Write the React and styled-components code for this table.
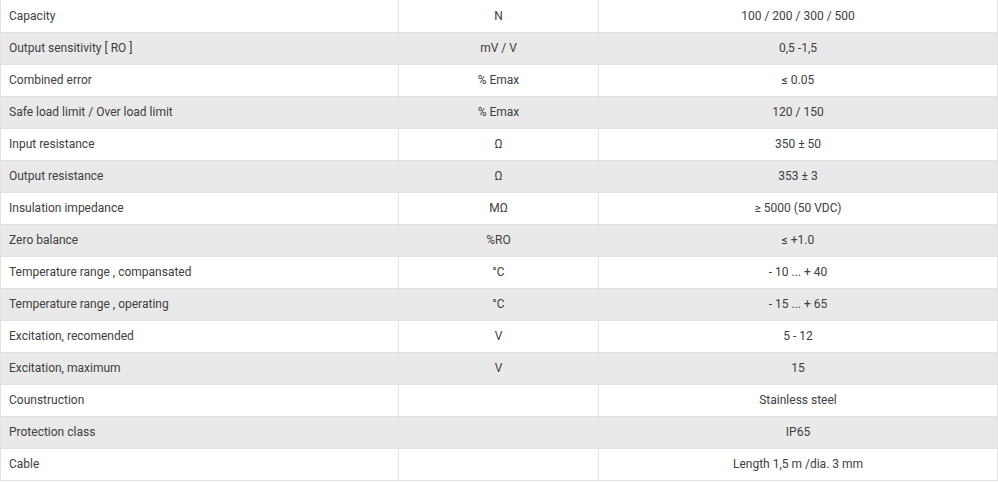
import styled, { createGlobalStyle } from "styled-components";

const GlobalStyle = createGlobalStyle`
    html, body {
        margin: 0;
        padding: 0;
        background: #fff;
    }
    body {
        font-family: Roboto, "Liberation Sans", Arial, sans-serif;
    }
`

const specs = [
    ["Capacity", "N", "100 / 200 / 300 / 500"],
    ["Output sensitivity [ RO ]", "mV / V", "0,5 -1,5"],
    ["Combined error", "% Emax", "≤ 0.05"],
    ["Safe load limit / Over load limit", "% Emax", "120 / 150"],
    ["Input resistance", "Ω", "350 ± 50"],
    ["Output resistance", "Ω", "353 ± 3"],
    ["Insulation impedance", "MΩ", "≥ 5000 (50 VDC)"],
    ["Zero balance", "%RO", "≤ +1.0"],
    ["Temperature range , compansated", "°C", "- 10 ... + 40"],
    ["Temperature range , operating", "°C", "- 15 ... + 65"],
    ["Excitation, recomended", "V", "5 - 12"],
    ["Excitation, maximum", "V", "15"],
    ["Counstruction", "", "Stainless steel"],
    ["Protection class", "", "IP65"],
    ["Cable", "", "Length 1,5 m /dia. 3 mm"],
]

function App() {
    return (
        <>
            <GlobalStyle />
            <SpecTable>
                <colgroup>
                    <col style={{ width: 398 }} />
                    <col style={{ width: 200 }} />
                    <col />
                </colgroup>
                <tbody>
                    {specs.map(([name, unit, value], i) => (
                        <Row key={name} $striped={i % 2 === 1}>
                            <NameCell>{name}</NameCell>
                            <Cell>{unit}</Cell>
                            <Cell>{value}</Cell>
                        </Row>
                    ))}
                </tbody>
            </SpecTable>
        </>
    );
}

const SpecTable = styled.table`
    width: 998px;
    table-layout: fixed;
    border-collapse: collapse;
    border-top: hidden;
    font-size: 12px;
    color: #404040;
`

const Row = styled.tr`
    height: 32px;
    background: ${p => p.$striped ? "#e9e9e9" : "#fff"};
`

const Cell = styled.td`
    border: 1px solid #e3e3e3;
    padding: 0 8px;
    text-align: center;
    vertical-align: middle;
    line-height: 14px;
`

const NameCell = styled(Cell)`
    text-align: left;
`

export default App;
